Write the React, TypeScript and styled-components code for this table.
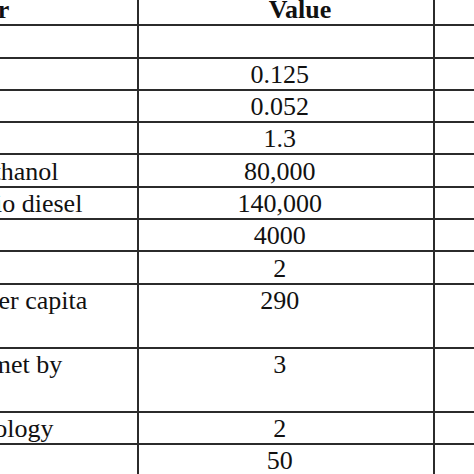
import React from 'react';
import styled, { createGlobalStyle } from 'styled-components';

interface Row {
  label: string;
  value: string;
  tall?: boolean;
}

const rows: Row[] = [
  { label: 'Inputs', value: '' },
  { label: 'Interest', value: '0.125' },
  { label: 'Inflation', value: '0.052' },
  { label: 'Growth', value: '1.3' },
  { label: 'Yield of ethanol', value: '80,000' },
  { label: 'Yield of bio diesel', value: '140,000' },
  { label: 'Villages', value: '4000' },
  { label: 'Units', value: '2' },
  { label: 'Demand per capita (kWh)', value: '290', tall: true },
  { label: 'Full load met by biogas (h)', value: '3', tall: true },
  { label: 'Gas technology', value: '2' },
  { label: 'Lifetime', value: '50' },
];

const GlobalStyle = createGlobalStyle`
  html, body {
    margin: 0;
    padding: 0;
    background: #fff;
  }
`;

const Viewport = styled.div`
  width: 474px;
  height: 474px;
  overflow: hidden;
  background: #fff;
`;

const Table = styled.table`
  border-collapse: collapse;
  table-layout: fixed;
  width: 670px;
  margin: -8px 0 0 -117px;
  font-family: "Liberation Serif", "Times New Roman", serif;
  font-size: 26px;
  line-height: 29px;
  color: #111;
`;

const HeadCell = styled.th<{ $align: 'left' | 'center' }>`
  border: 2px solid #2b2b2b;
  padding: 1.3px 0 0 ${p => (p.$align === 'left' ? '6px' : '28px')};
  text-align: ${p => p.$align};
  font-weight: 700;
  vertical-align: top;
`;

const LabelCell = styled.td<{ $tall?: boolean }>`
  border: 2px solid #2b2b2b;
  padding: 1.3px 6px ${p => (p.$tall ? '2.7px' : '0')} 6px;
  text-align: left;
  vertical-align: top;
`;

const ValueCell = styled.td<{ $tall?: boolean }>`
  border: 2px solid #2b2b2b;
  padding: 1.3px 12.6px ${p => (p.$tall ? '2.7px' : '0')} 0;
  text-align: center;
  vertical-align: top;
`;

const NoteCell = styled.td`
  border: 2px solid #2b2b2b;
  padding: 1.3px 6px 0;
  vertical-align: top;
`;

export default function App() {
  return (
    <>
      <GlobalStyle />
      <Viewport>
        <Table>
          <colgroup>
            <col style={{ width: 254 }} />
            <col style={{ width: 296 }} />
            <col style={{ width: 120 }} />
          </colgroup>
          <thead>
            <tr>
              <HeadCell $align="left">Parameter</HeadCell>
              <HeadCell $align="center">Value</HeadCell>
              <HeadCell $align="left"></HeadCell>
            </tr>
          </thead>
          <tbody>
            {rows.map((row, i) => (
              <tr key={i}>
                <LabelCell $tall={row.tall}>{row.label}</LabelCell>
                <ValueCell $tall={row.tall}>{row.value}</ValueCell>
                <NoteCell></NoteCell>
              </tr>
            ))}
          </tbody>
        </Table>
      </Viewport>
    </>
  );
}
